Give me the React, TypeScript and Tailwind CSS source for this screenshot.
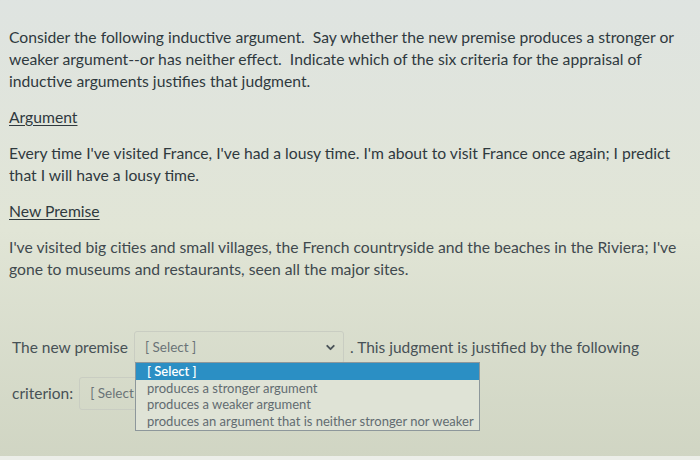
import { ChevronDown } from "lucide-react";

const options = [
  "produces a stronger argument",
  "produces a weaker argument",
  "produces an argument that is neither stronger nor weaker",
];

function SelectBox({ label, width, clipped }: { label: string; width: string; clipped?: boolean }) {
  return (
    <div
      className={`flex h-[33px] items-center justify-between rounded-[3px] border border-[#c9cdc2] pl-[10px] pr-[6px] ${width}`}
    >
      <span className="text-[13.5px] text-[#6a7377]">{label}</span>
      {!clipped && <ChevronDown className="h-[13px] w-[13px] text-[#4a5358]" strokeWidth={3.5} />}
    </div>
  );
}

export default function App() {
  return (
    <div
      className="relative h-[460px] w-[700px] overflow-hidden bg-linear-to-b from-[#dfe4e1] via-[#e1e5d6] to-[#d0d5c3] text-[#2f393e]"
      style={{ fontFamily: "Lato, 'Open Sans', sans-serif" }}
    >
      <div className="px-[9px] pt-[26px] text-[15.7px] leading-[22px]">
        <p>
          Consider the following inductive argument.&nbsp; Say whether the new premise produces a stronger or
          weaker argument--or has neither effect.&nbsp; Indicate which of the six criteria for the appraisal of
          inductive arguments justifies that judgment.
        </p>
        <p className="mt-[14px] underline underline-offset-2">Argument</p>
        <p className="mt-[14px]">
          Every time I've visited France, I've had a lousy time. I'm about to visit France once again; I predict
          that I will have a lousy time.
        </p>
        <p className="mt-[14px] underline underline-offset-2">New Premise</p>
        <p className="mt-[14px] text-[#40494e]">
          I've visited big cities and small villages, the French countryside and the beaches in the Riviera; I've
          gone to museums and restaurants, seen all the major sites.
        </p>
      </div>

      <div className="mt-[51px] px-[12px] text-[15.5px] text-[#475156]">
        <div className="flex items-center gap-[6px]">
          <span>The new premise</span>
          <SelectBox label="[ Select ]" width="w-[210px]" />
          <span>. This judgment is justified by the following</span>
        </div>
        <div className="mt-[13px] flex items-center gap-[6px]">
          <span>criterion:</span>
          <SelectBox label="[ Select ]" width="w-[150px]" clipped />
        </div>
      </div>

      <div className="absolute left-[135px] top-[362px] w-[345px] border border-[#8d979b] bg-[#dfe3d6] text-[13px] leading-[16.7px] text-[#626c71]">
        <div className="bg-[#2b8fc4] pl-[11px] font-semibold text-white">[ Select ]</div>
        {options.map((o) => (
          <div key={o} className="pl-[11px]">
            {o}
          </div>
        ))}
      </div>

      <div className="absolute bottom-0 left-0 h-[4px] w-full bg-[#eceee9]" />
    </div>
  );
}
